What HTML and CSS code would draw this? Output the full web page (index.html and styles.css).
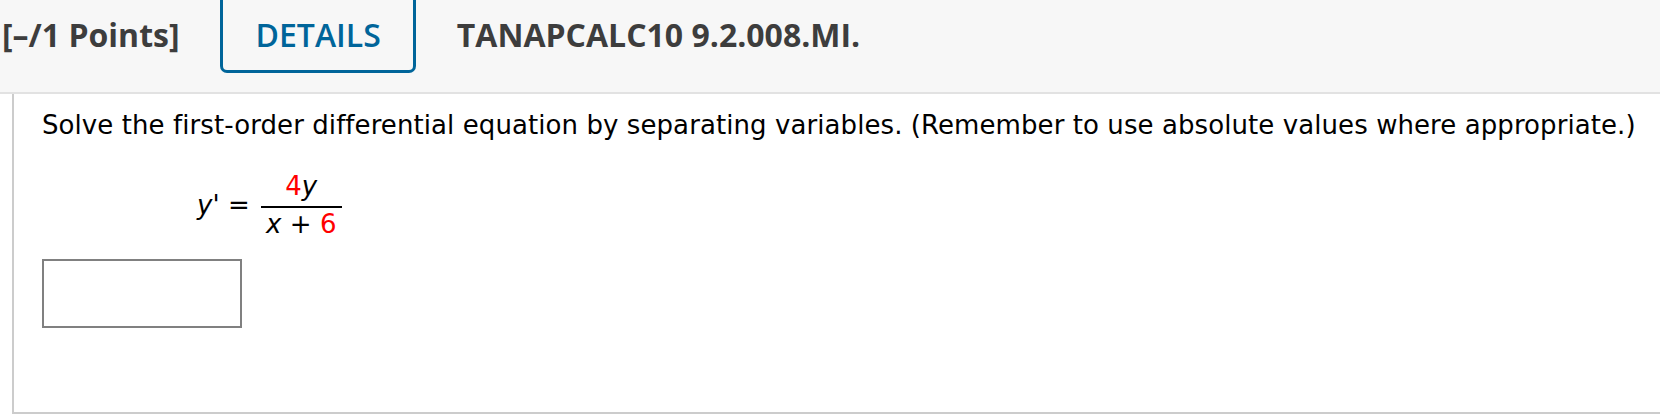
FILE: index.html
```html
<!DOCTYPE html>
<html>
<head>
<meta charset="utf-8">
<link rel="stylesheet" href="styles.css">
</head>
<body>
<div class="header">
  <span class="points">[–/1 Points]</span>
  <span class="details">DETAILS</span>
  <span class="code">TANAPCALC10 9.2.008.MI.</span>
</div>
<div class="content">
  <p class="question">Solve the first-order differential equation by separating variables. (Remember to use absolute values where appropriate.)</p>
  <div class="equation">
    <span class="lhs"><i>y'</i> =</span>
    <span class="frac">
      <span class="num"><span class="red">4</span><i>y</i></span>
      <span class="den"><i>x</i> + <span class="red">6</span></span>
    </span>
  </div>
  <div class="answer"></div>
</div>
</body>
</html>
```
FILE: styles.css
```css
html, body {
  margin: 0;
  padding: 0;
  background: #ffffff;
}
body {
  width: 1660px;
  height: 418px;
  overflow: hidden;
}
.header {
  height: 92px;
  background: #f7f7f7;
  border-bottom: 2px solid #e2e2e2;
  display: flex;
  align-items: flex-start;
  font-family: "Open Sans", sans-serif;
  font-size: 32px;
  color: #3d3d3d;
}
.points {
  font-weight: 700;
  margin-left: 2px;
  margin-top: 13px;
  line-height: 44px;
}
.details {
  margin-left: 40px;
  height: 57px;
  padding: 13px 32px 0 33px;
  border: 3px solid #00659a;
  border-top: 0;
  border-radius: 0 0 7px 7px;
  color: #00659a;
  font-weight: 600;
  line-height: 44px;
  background: #f7f7f7;
}
.code {
  font-weight: 700;
  margin-left: 41px;
  margin-top: 13px;
  line-height: 44px;
}
.content {
  margin-left: 12px;
  height: 318px;
  border-left: 2px solid #cccccc;
  border-bottom: 2px solid #cccccc;
  padding-left: 28px;
  font-family: "DejaVu Sans", Verdana, sans-serif;
  font-size: 26px;
  letter-spacing: 0.08px;
  color: #000;
}
.question {
  margin: 0;
  padding-top: 15px;
  line-height: 32px;
}
.equation {
  display: flex;
  align-items: center;
  margin-left: 155px;
  margin-top: 30px;
  line-height: 30px;
}
.lhs {
  margin-right: 11px;
}
.frac {
  display: inline-flex;
  flex-direction: column;
  align-items: center;
}
.num {
  padding: 0 0 5px;
  border-bottom: 2px solid #000;
  align-self: stretch;
  text-align: center;
}
.den {
  padding: 1px 5px 0;
}
.red {
  color: #ff0000;
}
.answer {
  margin-top: 20px;
  width: 196px;
  height: 65px;
  border: 2px solid #808080;
}
```
